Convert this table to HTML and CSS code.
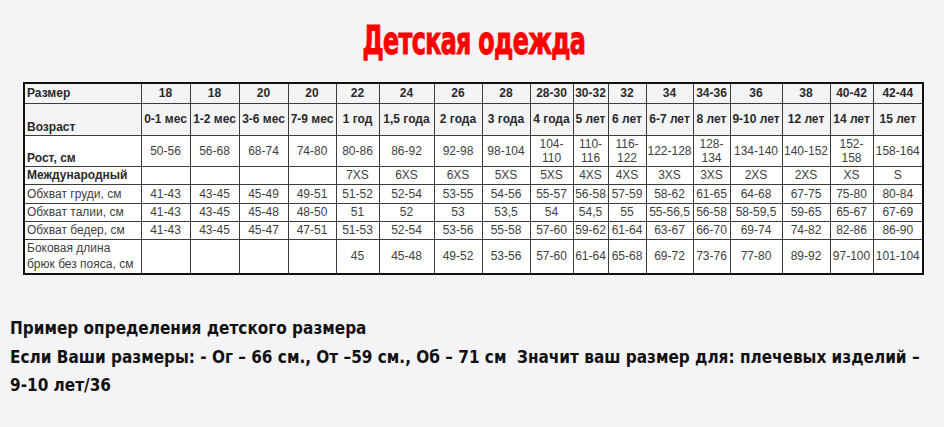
FILE: index.html
```html
<!DOCTYPE html>
<html lang="ru">
<head>
<meta charset="utf-8">
<title>Детская одежда</title>
<link rel="stylesheet" href="styles.css">
</head>
<body>
<h1 class="title"><span class="title-text">Детская одежда</span></h1>
<table class="sizes">
  <colgroup>
    <col style="width:117px"><col style="width:49px"><col style="width:49px"><col style="width:49px"><col style="width:48px"><col style="width:43px"><col style="width:55px"><col style="width:48px"><col style="width:48px"><col style="width:43px"><col style="width:35px"><col style="width:38px"><col style="width:47px"><col style="width:37px"><col style="width:52px"><col style="width:48px"><col style="width:43px"><col style="width:50px">
  </colgroup>
  <tr class="head r1">
    <th class="lbl">Размер</th><th>18</th><th>18</th><th>20</th><th>20</th><th>22</th><th>24</th><th>26</th><th>28</th><th>28-30</th><th>30-32</th><th>32</th><th>34</th><th>34-36</th><th>36</th><th>38</th><th>40-42</th><th>42-44</th>
  </tr>
  <tr class="head r2">
    <th class="lbl bottom">Возраст</th><th>0-1 мес</th><th>1-2 мес</th><th>3-6 мес</th><th>7-9 мес</th><th>1 год</th><th>1,5 года</th><th>2 года</th><th>3 года</th><th>4 года</th><th>5 лет</th><th>6 лет</th><th>6-7 лет</th><th>8 лет</th><th>9-10 лет</th><th>12 лет</th><th>14 лет</th><th>15 лет</th>
  </tr>
  <tr class="r3">
    <td class="lbl bottom strong">Рост, см</td><td>50-56</td><td>56-68</td><td>68-74</td><td>74-80</td><td>80-86</td><td>86-92</td><td>92-98</td><td>98-104</td><td>104-<br>110</td><td>110-<br>116</td><td>116-<br>122</td><td>122-128</td><td>128-<br>134</td><td>134-140</td><td>140-152</td><td>152-<br>158</td><td>158-164</td>
  </tr>
  <tr class="r4">
    <td class="lbl strong">Международный</td><td></td><td></td><td></td><td></td><td>7XS</td><td>6XS</td><td>6XS</td><td>5XS</td><td>5XS</td><td>4XS</td><td>4XS</td><td>3XS</td><td>3XS</td><td>2XS</td><td>2XS</td><td>XS</td><td>S</td>
  </tr>
  <tr class="r5">
    <td class="lbl">Обхват груди, см</td><td>41-43</td><td>43-45</td><td>45-49</td><td>49-51</td><td>51-52</td><td>52-54</td><td>53-55</td><td>54-56</td><td>55-57</td><td>56-58</td><td>57-59</td><td>58-62</td><td>61-65</td><td>64-68</td><td>67-75</td><td>75-80</td><td>80-84</td>
  </tr>
  <tr class="r6">
    <td class="lbl">Обхват талии, см</td><td>41-43</td><td>43-45</td><td>45-48</td><td>48-50</td><td>51</td><td>52</td><td>53</td><td>53,5</td><td>54</td><td>54,5</td><td>55</td><td>55-56,5</td><td>56-58</td><td>58-59,5</td><td>59-65</td><td>65-67</td><td>67-69</td>
  </tr>
  <tr class="r7">
    <td class="lbl">Обхват бедер, см</td><td>41-43</td><td>43-45</td><td>45-47</td><td>47-51</td><td>51-53</td><td>52-54</td><td>53-56</td><td>55-58</td><td>57-60</td><td>59-62</td><td>61-64</td><td>63-67</td><td>66-70</td><td>69-74</td><td>74-82</td><td>82-86</td><td>86-90</td>
  </tr>
  <tr class="r8">
    <td class="lbl top">Боковая длина<br>брюк без пояса, см</td><td></td><td></td><td></td><td></td><td>45</td><td>45-48</td><td>49-52</td><td>53-56</td><td>57-60</td><td>61-64</td><td>65-68</td><td>69-72</td><td>73-76</td><td>77-80</td><td>89-92</td><td>97-100</td><td>101-104</td>
  </tr>
</table>
<div class="note">
  <p class="note-line">Пример определения детского размера</p>
  <p class="note-line">Если Ваши размеры: - Ог – 66 см., От –59 см., Об – 71 см&nbsp; Значит ваш размер для: плечевых изделий –</p>
  <p class="note-line">9-10 лет/36</p>
</div>
</body>
</html>
```

FILE: styles.css
```css
html, body {
  margin: 0;
  padding: 0;
  background: #f4f4f7;
}
body {
  width: 944px;
  height: 427px;
  overflow: hidden;
}
.title {
  margin: 0;
  padding-top: 21px;
  height: 82px;
  box-sizing: border-box;
  text-align: center;
  font-family: "DejaVu Sans Condensed", "DejaVu Sans", sans-serif;
  font-weight: bold;
  font-size: 39px;
  line-height: 40px;
  color: #ff0000;
}
.title-text {
  display: inline-block;
  transform: scaleX(0.68);
  letter-spacing: -1px;
  padding-left: 6px;
  -webkit-text-stroke: 1px #ff0000;
}
.sizes {
  margin-left: 23px;
  border-collapse: collapse;
  table-layout: fixed;
  width: 899px;
  border: 2px solid #111;
  font-family: "Liberation Sans", Arial, sans-serif;
  font-size: 12px;
  color: #404040;
  background: #ffffff;
}
.sizes th, .sizes td {
  border: 1px solid #3c3c3c;
  padding: 0 1px;
  text-align: center;
  vertical-align: middle;
  line-height: 14px;
  white-space: nowrap;
}
.sizes .head th {
  background: #f4f4f6;
  font-weight: bold;
  color: #2a2a2a;
}
.sizes .lbl {
  text-align: left;
  padding-left: 2px;
}
.sizes .bottom { vertical-align: bottom; padding-bottom: 1px; }
.sizes .top { vertical-align: top; line-height: 16px; }
.sizes .strong { font-weight: bold; color: #2a2a2a; }
.r1 { height: 20px; }
.r2 { height: 32px; }
.r3 { height: 31px; }
.r4 { height: 18px; }
.r5 { height: 19px; }
.r6 { height: 18px; }
.r7 { height: 18px; }
.r8 { height: 35px; }
.note {
  margin-top: 39px;
  padding-left: 10px;
  font-family: "DejaVu Sans Condensed", "DejaVu Sans", sans-serif;
  font-weight: bold;
  font-size: 17px;
  color: #111;
}
.note-line {
  margin: 0;
  line-height: 28.5px;
  white-space: nowrap;
}
```
